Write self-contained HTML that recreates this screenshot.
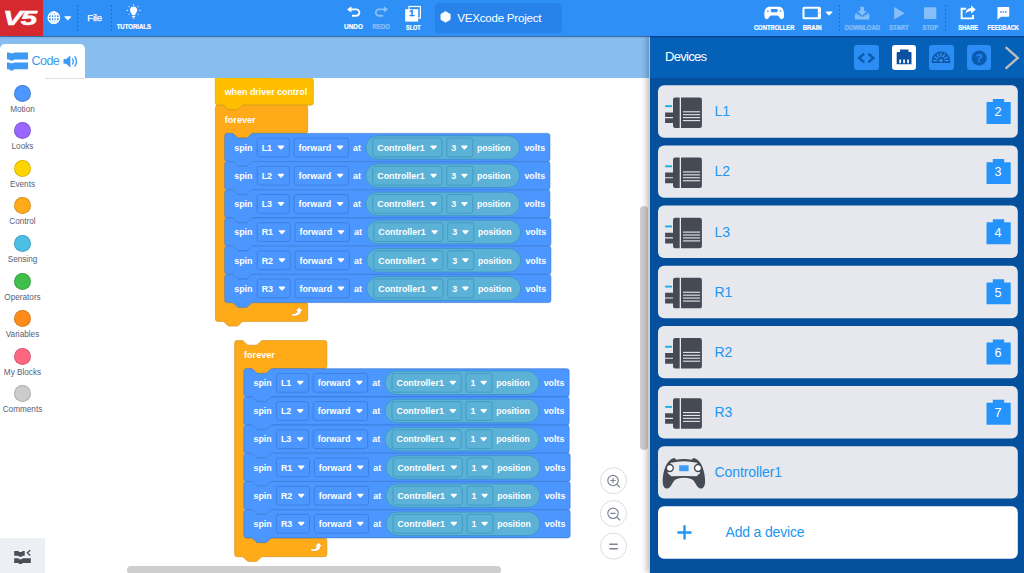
<!DOCTYPE html>
<html lang="en">
<head>
<meta charset="utf-8">
<title>VEXcode V5</title>
<style>
*{box-sizing:border-box;margin:0;padding:0}
html,body{width:1024px;height:573px;overflow:hidden;background:#fff;font-family:"Liberation Sans",sans-serif}
#app{position:relative;width:1024px;height:573px;overflow:hidden}
.abs{position:absolute}
#topbar{position:absolute;left:0;top:0;width:1024px;height:36px;background:#2E90F6;z-index:5;box-shadow:0 1px 0 rgba(0,35,90,.38),0 1px 2px rgba(0,35,90,.3)}
#logo{position:absolute;left:0;top:0;width:43px;height:36px;background:#D6282F}
#logo span{position:absolute;left:3px;top:6.7px;color:#fff;font-weight:700;font-style:italic;font-size:19.6px;line-height:22px;letter-spacing:-1.2px;transform:scaleX(1.5);transform-origin:0 50%;-webkit-text-stroke:.5px #fff}
.sep{position:absolute;top:5px;height:26px;width:1px;background:repeating-linear-gradient(to bottom,#1D6FD3 0,#1D6FD3 2px,rgba(29,111,211,0) 2px,rgba(29,111,211,0) 4px)}
.tlabel{position:absolute;color:#fff;font-weight:700;font-size:6.2px;line-height:7px;white-space:nowrap;text-align:center;letter-spacing:0;transform:scaleY(1.14);transform-origin:50% 50%;-webkit-text-stroke:.2px #fff}
.dim{opacity:.42}
#tabbar{position:absolute;left:0;top:36px;width:650px;height:42px;background:#88BDF0}
#tab{position:absolute;left:0;top:8px;width:85px;height:34px;background:#fff;border-radius:5px 5px 0 0}
#tab .t{position:absolute;left:31.5px;top:10px;font-size:12.6px;line-height:15px;color:#3B98F4;letter-spacing:-.6px}
#toolbox{position:absolute;left:0;top:78px;width:45px;height:495px;background:#fff}
.cat{position:absolute;left:0;width:45px;text-align:center}
.cat i{display:block;width:17px;height:17px;border-radius:50%;margin:0 auto;border:1px solid rgba(0,0,0,.15)}
.cat span{display:block;font-size:8.2px;line-height:9px;color:#575E75;margin-top:3px;white-space:nowrap;margin-left:-5px;margin-right:-5px}
#panel{position:absolute;left:650px;top:36px;width:374px;height:537px;background:#04509D;box-shadow:-3px 0 6px rgba(0,0,0,.28)}
#phead{position:absolute;left:0;top:0;width:374px;height:42px;background:#0560B8}
#phead .ttl{position:absolute;left:15px;top:13px;color:#fff;font-size:13px;line-height:15px;letter-spacing:-.7px}
.pbtn{position:absolute;top:9px;width:24.5px;height:24.5px;border-radius:3px;background:#2C8EF4}
.card{position:absolute;left:8px;width:360px;height:52px}
.card .nm{position:absolute;left:56.600px;top:17.600px;font-size:14px;line-height:16px;letter-spacing:-.1px;color:#2196F3;white-space:nowrap}
.card .port{position:absolute;left:328px;top:13.5px;width:24.2px;height:25px}
.card .port b{position:absolute;left:0;width:24.2px;top:6.500px;text-align:center;color:#fff;font-weight:400;font-size:12.6px;line-height:14px}
</style>
</head>
<body>
<div id="app">

<!-- workspace -->
<div id="workspace" class="abs" style="left:45px;top:78px;width:605px;height:495px;background:#fff"></div>
<svg id="ws" width="605" height="495" viewBox="0 0 605 495" style="position:absolute;left:45px;top:78px"><g transform="translate(-45,-78) scale(0.5875)" font-family="'Liberation Sans',sans-serif" font-weight="700" font-size="15.15" fill="#fff" stroke-width="1"><g transform="translate(366.47,179.06)"><path d="M 0,-46 c 25,-22 71,-22 96,0 H 162.9 a 4,4 0 0,1 4,4 V -4 a 4,4 0 0,1 -4,4 H 48 c -2,0 -3,1 -4,2 l -4,4 c -1,1 -2,2 -4,2 h -12 c -2,0 -3,-1 -4,-2 l -4,-4 c -1,-1 -2,-2 -4,-2 H 4 a 4,4 0 0,1 -4,-4 z" fill="#FFBF00" stroke="#CC9900"/><text x="16.00" y="-17.50">when driver control</text></g><g transform="translate(366.64,179.06)"><path d="M 0,4 A 4,4 0 0,1 4,0 H 12 c 2,0 3,1 4,2 l 4,4 c 1,1 2,2 4,2 h 12 c 2,0 3,-1 4,-2 l 4,-4 c 1,-1 2,-2 4,-2 H 153.00 a 4,4 0 0,1 4,4 V 44 a 4,4 0 0,1 -4,4 H 64 c -2,0 -3,1 -4,2 l -4,4 c -1,1 -2,2 -4,2 h -12 c -2,0 -3,-1 -4,-2 l -4,-4 c -1,-1 -2,-2 -4,-2 H 20 a 4,4 0 0,0 -4,4 V 332 a 4,4 0 0,0 4,4 H 28 c 2,0 3,1 4,2 l 4,4 c 1,1 2,2 4,2 h 12 c 2,0 3,-1 4,-2 l 4,-4 c 1,-1 2,-2 4,-2 H 153.00 a 4,4 0 0,1 4,4 V 364 a 4,4 0 0,1 -4,4 H 48 c -2,0 -3,1 -4,2 l -4,4 c -1,1 -2,2 -4,2 h -12 c -2,0 -3,-1 -4,-2 l -4,-4 c -1,-1 -2,-2 -4,-2 H 4 a 4,4 0 0,1 -4,-4 z" fill="#FFAB19" stroke="#CF8B17"/><text x="16" y="29.5" textLength="52.4" lengthAdjust="spacingAndGlyphs">forever</text><g transform="translate(129.9,344.7) scale(1.702)"><path d="M7.5,-0.2 L11,3.3 L9.3,3.4 C9,7 5.600,9 0.300,7.500 L0.200,6.100 C3.600,6.700 5.700,5.600 5.800,3.400 L4,3.400 Z" fill="#fff" stroke="#D9921A" stroke-width=".8" stroke-linejoin="round" paint-order="stroke"/></g></g><g transform="translate(382.64,227.06)"><path d="M 0,4 A 4,4 0 0,1 4,0 H 12 c 2,0 3,1 4,2 l 4,4 c 1,1 2,2 4,2 h 12 c 2,0 3,-1 4,-2 l 4,-4 c 1,-1 2,-2 4,-2 H 549.36 a 4,4 0 0,1 4,4 V 44 a 4,4 0 0,1 -4,4 H 48 c -2,0 -3,1 -4,2 l -4,4 c -1,1 -2,2 -4,2 h -12 c -2,0 -3,-1 -4,-2 l -4,-4 c -1,-1 -2,-2 -4,-2 H 4 a 4,4 0 0,1 -4,-4 z" fill="#4C97FF" stroke="#3373CC"/><text x="16.00" y="29.50">spin</text><rect x="55.14" y="8" width="54.68" height="32" rx="4" fill="#4C97FF" stroke="#3373CC"/><text x="62.74" y="29.50">L1</text><path transform="translate(90.12,20.7)" d="M1.1,0 h8.8 a1.1,1.1 0 0,1 0.8,1.85 l-4.2,4.5 a1.35,1.35 0 0,1 -2,0 l-4.2,-4.5 a1.1,1.1 0 0,1 0.8,-1.85 z" fill="#fff"/><rect x="117.82" y="8" width="92.56" height="32" rx="4" fill="#4C97FF" stroke="#3373CC"/><text x="125.42" y="29.50">forward</text><path transform="translate(190.68,20.7)" d="M1.1,0 h8.8 a1.1,1.1 0 0,1 0.8,1.85 l-4.2,4.5 a1.35,1.35 0 0,1 -2,0 l-4.2,-4.5 a1.1,1.1 0 0,1 0.8,-1.85 z" fill="#fff"/><text x="218.38" y="29.50">at</text><rect x="239.85" y="4" width="262.14" height="40" rx="20" fill="#5CB1D6" stroke="#2E8EB8"/><rect x="251.85" y="8" width="117.81" height="32" rx="4" fill="#5CB1D6" stroke="#2E8EB8"/><text x="259.45" y="29.50">Controller1</text><path transform="translate(349.96,20.7)" d="M1.1,0 h8.8 a1.1,1.1 0 0,1 0.8,1.85 l-4.2,4.5 a1.35,1.35 0 0,1 -2,0 l-4.2,-4.5 a1.1,1.1 0 0,1 0.8,-1.85 z" fill="#fff"/><rect x="377.66" y="8" width="44.43" height="32" rx="4" fill="#5CB1D6" stroke="#2E8EB8"/><text x="385.26" y="29.50">3</text><path transform="translate(402.39,20.7)" d="M1.1,0 h8.8 a1.1,1.1 0 0,1 0.8,1.85 l-4.2,4.5 a1.35,1.35 0 0,1 -2,0 l-4.2,-4.5 a1.1,1.1 0 0,1 0.8,-1.85 z" fill="#fff"/><text x="429.09" y="29.5" textLength="57.31" lengthAdjust="spacingAndGlyphs">position</text><text x="510.00" y="29.50">volts</text></g><g transform="translate(382.64,275.06)"><path d="M 0,4 A 4,4 0 0,1 4,0 H 12 c 2,0 3,1 4,2 l 4,4 c 1,1 2,2 4,2 h 12 c 2,0 3,-1 4,-2 l 4,-4 c 1,-1 2,-2 4,-2 H 549.36 a 4,4 0 0,1 4,4 V 44 a 4,4 0 0,1 -4,4 H 48 c -2,0 -3,1 -4,2 l -4,4 c -1,1 -2,2 -4,2 h -12 c -2,0 -3,-1 -4,-2 l -4,-4 c -1,-1 -2,-2 -4,-2 H 4 a 4,4 0 0,1 -4,-4 z" fill="#4C97FF" stroke="#3373CC"/><text x="16.00" y="29.50">spin</text><rect x="55.14" y="8" width="54.68" height="32" rx="4" fill="#4C97FF" stroke="#3373CC"/><text x="62.74" y="29.50">L2</text><path transform="translate(90.12,20.7)" d="M1.1,0 h8.8 a1.1,1.1 0 0,1 0.8,1.85 l-4.2,4.5 a1.35,1.35 0 0,1 -2,0 l-4.2,-4.5 a1.1,1.1 0 0,1 0.8,-1.85 z" fill="#fff"/><rect x="117.82" y="8" width="92.56" height="32" rx="4" fill="#4C97FF" stroke="#3373CC"/><text x="125.42" y="29.50">forward</text><path transform="translate(190.68,20.7)" d="M1.1,0 h8.8 a1.1,1.1 0 0,1 0.8,1.85 l-4.2,4.5 a1.35,1.35 0 0,1 -2,0 l-4.2,-4.5 a1.1,1.1 0 0,1 0.8,-1.85 z" fill="#fff"/><text x="218.38" y="29.50">at</text><rect x="239.85" y="4" width="262.14" height="40" rx="20" fill="#5CB1D6" stroke="#2E8EB8"/><rect x="251.85" y="8" width="117.81" height="32" rx="4" fill="#5CB1D6" stroke="#2E8EB8"/><text x="259.45" y="29.50">Controller1</text><path transform="translate(349.96,20.7)" d="M1.1,0 h8.8 a1.1,1.1 0 0,1 0.8,1.85 l-4.2,4.5 a1.35,1.35 0 0,1 -2,0 l-4.2,-4.5 a1.1,1.1 0 0,1 0.8,-1.85 z" fill="#fff"/><rect x="377.66" y="8" width="44.43" height="32" rx="4" fill="#5CB1D6" stroke="#2E8EB8"/><text x="385.26" y="29.50">3</text><path transform="translate(402.39,20.7)" d="M1.1,0 h8.8 a1.1,1.1 0 0,1 0.8,1.85 l-4.2,4.5 a1.35,1.35 0 0,1 -2,0 l-4.2,-4.5 a1.1,1.1 0 0,1 0.8,-1.85 z" fill="#fff"/><text x="429.09" y="29.5" textLength="57.31" lengthAdjust="spacingAndGlyphs">position</text><text x="510.00" y="29.50">volts</text></g><g transform="translate(382.64,323.06)"><path d="M 0,4 A 4,4 0 0,1 4,0 H 12 c 2,0 3,1 4,2 l 4,4 c 1,1 2,2 4,2 h 12 c 2,0 3,-1 4,-2 l 4,-4 c 1,-1 2,-2 4,-2 H 549.36 a 4,4 0 0,1 4,4 V 44 a 4,4 0 0,1 -4,4 H 48 c -2,0 -3,1 -4,2 l -4,4 c -1,1 -2,2 -4,2 h -12 c -2,0 -3,-1 -4,-2 l -4,-4 c -1,-1 -2,-2 -4,-2 H 4 a 4,4 0 0,1 -4,-4 z" fill="#4C97FF" stroke="#3373CC"/><text x="16.00" y="29.50">spin</text><rect x="55.14" y="8" width="54.68" height="32" rx="4" fill="#4C97FF" stroke="#3373CC"/><text x="62.74" y="29.50">L3</text><path transform="translate(90.12,20.7)" d="M1.1,0 h8.8 a1.1,1.1 0 0,1 0.8,1.85 l-4.2,4.5 a1.35,1.35 0 0,1 -2,0 l-4.2,-4.5 a1.1,1.1 0 0,1 0.8,-1.85 z" fill="#fff"/><rect x="117.82" y="8" width="92.56" height="32" rx="4" fill="#4C97FF" stroke="#3373CC"/><text x="125.42" y="29.50">forward</text><path transform="translate(190.68,20.7)" d="M1.1,0 h8.8 a1.1,1.1 0 0,1 0.8,1.85 l-4.2,4.5 a1.35,1.35 0 0,1 -2,0 l-4.2,-4.5 a1.1,1.1 0 0,1 0.8,-1.85 z" fill="#fff"/><text x="218.38" y="29.50">at</text><rect x="239.85" y="4" width="262.14" height="40" rx="20" fill="#5CB1D6" stroke="#2E8EB8"/><rect x="251.85" y="8" width="117.81" height="32" rx="4" fill="#5CB1D6" stroke="#2E8EB8"/><text x="259.45" y="29.50">Controller1</text><path transform="translate(349.96,20.7)" d="M1.1,0 h8.8 a1.1,1.1 0 0,1 0.8,1.85 l-4.2,4.5 a1.35,1.35 0 0,1 -2,0 l-4.2,-4.5 a1.1,1.1 0 0,1 0.8,-1.85 z" fill="#fff"/><rect x="377.66" y="8" width="44.43" height="32" rx="4" fill="#5CB1D6" stroke="#2E8EB8"/><text x="385.26" y="29.50">3</text><path transform="translate(402.39,20.7)" d="M1.1,0 h8.8 a1.1,1.1 0 0,1 0.8,1.85 l-4.2,4.5 a1.35,1.35 0 0,1 -2,0 l-4.2,-4.5 a1.1,1.1 0 0,1 0.8,-1.85 z" fill="#fff"/><text x="429.09" y="29.5" textLength="57.31" lengthAdjust="spacingAndGlyphs">position</text><text x="510.00" y="29.50">volts</text></g><g transform="translate(382.64,371.06)"><path d="M 0,4 A 4,4 0 0,1 4,0 H 12 c 2,0 3,1 4,2 l 4,4 c 1,1 2,2 4,2 h 12 c 2,0 3,-1 4,-2 l 4,-4 c 1,-1 2,-2 4,-2 H 551.04 a 4,4 0 0,1 4,4 V 44 a 4,4 0 0,1 -4,4 H 48 c -2,0 -3,1 -4,2 l -4,4 c -1,1 -2,2 -4,2 h -12 c -2,0 -3,-1 -4,-2 l -4,-4 c -1,-1 -2,-2 -4,-2 H 4 a 4,4 0 0,1 -4,-4 z" fill="#4C97FF" stroke="#3373CC"/><text x="16.00" y="29.50">spin</text><rect x="55.14" y="8" width="56.37" height="32" rx="4" fill="#4C97FF" stroke="#3373CC"/><text x="62.74" y="29.50">R1</text><path transform="translate(91.81,20.7)" d="M1.1,0 h8.8 a1.1,1.1 0 0,1 0.8,1.85 l-4.2,4.5 a1.35,1.35 0 0,1 -2,0 l-4.2,-4.5 a1.1,1.1 0 0,1 0.8,-1.85 z" fill="#fff"/><rect x="119.51" y="8" width="92.56" height="32" rx="4" fill="#4C97FF" stroke="#3373CC"/><text x="127.11" y="29.50">forward</text><path transform="translate(192.37,20.7)" d="M1.1,0 h8.8 a1.1,1.1 0 0,1 0.8,1.85 l-4.2,4.5 a1.35,1.35 0 0,1 -2,0 l-4.2,-4.5 a1.1,1.1 0 0,1 0.8,-1.85 z" fill="#fff"/><text x="220.07" y="29.50">at</text><rect x="241.54" y="4" width="262.14" height="40" rx="20" fill="#5CB1D6" stroke="#2E8EB8"/><rect x="253.54" y="8" width="117.81" height="32" rx="4" fill="#5CB1D6" stroke="#2E8EB8"/><text x="261.14" y="29.50">Controller1</text><path transform="translate(351.65,20.7)" d="M1.1,0 h8.8 a1.1,1.1 0 0,1 0.8,1.85 l-4.2,4.5 a1.35,1.35 0 0,1 -2,0 l-4.2,-4.5 a1.1,1.1 0 0,1 0.8,-1.85 z" fill="#fff"/><rect x="379.35" y="8" width="44.43" height="32" rx="4" fill="#5CB1D6" stroke="#2E8EB8"/><text x="386.95" y="29.50">3</text><path transform="translate(404.08,20.7)" d="M1.1,0 h8.8 a1.1,1.1 0 0,1 0.8,1.85 l-4.2,4.5 a1.35,1.35 0 0,1 -2,0 l-4.2,-4.5 a1.1,1.1 0 0,1 0.8,-1.85 z" fill="#fff"/><text x="430.78" y="29.5" textLength="57.31" lengthAdjust="spacingAndGlyphs">position</text><text x="511.68" y="29.50">volts</text></g><g transform="translate(382.64,419.06)"><path d="M 0,4 A 4,4 0 0,1 4,0 H 12 c 2,0 3,1 4,2 l 4,4 c 1,1 2,2 4,2 h 12 c 2,0 3,-1 4,-2 l 4,-4 c 1,-1 2,-2 4,-2 H 551.04 a 4,4 0 0,1 4,4 V 44 a 4,4 0 0,1 -4,4 H 48 c -2,0 -3,1 -4,2 l -4,4 c -1,1 -2,2 -4,2 h -12 c -2,0 -3,-1 -4,-2 l -4,-4 c -1,-1 -2,-2 -4,-2 H 4 a 4,4 0 0,1 -4,-4 z" fill="#4C97FF" stroke="#3373CC"/><text x="16.00" y="29.50">spin</text><rect x="55.14" y="8" width="56.37" height="32" rx="4" fill="#4C97FF" stroke="#3373CC"/><text x="62.74" y="29.50">R2</text><path transform="translate(91.81,20.7)" d="M1.1,0 h8.8 a1.1,1.1 0 0,1 0.8,1.85 l-4.2,4.5 a1.35,1.35 0 0,1 -2,0 l-4.2,-4.5 a1.1,1.1 0 0,1 0.8,-1.85 z" fill="#fff"/><rect x="119.51" y="8" width="92.56" height="32" rx="4" fill="#4C97FF" stroke="#3373CC"/><text x="127.11" y="29.50">forward</text><path transform="translate(192.37,20.7)" d="M1.1,0 h8.8 a1.1,1.1 0 0,1 0.8,1.85 l-4.2,4.5 a1.35,1.35 0 0,1 -2,0 l-4.2,-4.5 a1.1,1.1 0 0,1 0.8,-1.85 z" fill="#fff"/><text x="220.07" y="29.50">at</text><rect x="241.54" y="4" width="262.14" height="40" rx="20" fill="#5CB1D6" stroke="#2E8EB8"/><rect x="253.54" y="8" width="117.81" height="32" rx="4" fill="#5CB1D6" stroke="#2E8EB8"/><text x="261.14" y="29.50">Controller1</text><path transform="translate(351.65,20.7)" d="M1.1,0 h8.8 a1.1,1.1 0 0,1 0.8,1.85 l-4.2,4.5 a1.35,1.35 0 0,1 -2,0 l-4.2,-4.5 a1.1,1.1 0 0,1 0.8,-1.85 z" fill="#fff"/><rect x="379.35" y="8" width="44.43" height="32" rx="4" fill="#5CB1D6" stroke="#2E8EB8"/><text x="386.95" y="29.50">3</text><path transform="translate(404.08,20.7)" d="M1.1,0 h8.8 a1.1,1.1 0 0,1 0.8,1.85 l-4.2,4.5 a1.35,1.35 0 0,1 -2,0 l-4.2,-4.5 a1.1,1.1 0 0,1 0.8,-1.85 z" fill="#fff"/><text x="430.78" y="29.5" textLength="57.31" lengthAdjust="spacingAndGlyphs">position</text><text x="511.68" y="29.50">volts</text></g><g transform="translate(382.64,467.06)"><path d="M 0,4 A 4,4 0 0,1 4,0 H 12 c 2,0 3,1 4,2 l 4,4 c 1,1 2,2 4,2 h 12 c 2,0 3,-1 4,-2 l 4,-4 c 1,-1 2,-2 4,-2 H 551.04 a 4,4 0 0,1 4,4 V 44 a 4,4 0 0,1 -4,4 H 48 c -2,0 -3,1 -4,2 l -4,4 c -1,1 -2,2 -4,2 h -12 c -2,0 -3,-1 -4,-2 l -4,-4 c -1,-1 -2,-2 -4,-2 H 4 a 4,4 0 0,1 -4,-4 z" fill="#4C97FF" stroke="#3373CC"/><text x="16.00" y="29.50">spin</text><rect x="55.14" y="8" width="56.37" height="32" rx="4" fill="#4C97FF" stroke="#3373CC"/><text x="62.74" y="29.50">R3</text><path transform="translate(91.81,20.7)" d="M1.1,0 h8.8 a1.1,1.1 0 0,1 0.8,1.85 l-4.2,4.5 a1.35,1.35 0 0,1 -2,0 l-4.2,-4.5 a1.1,1.1 0 0,1 0.8,-1.85 z" fill="#fff"/><rect x="119.51" y="8" width="92.56" height="32" rx="4" fill="#4C97FF" stroke="#3373CC"/><text x="127.11" y="29.50">forward</text><path transform="translate(192.37,20.7)" d="M1.1,0 h8.8 a1.1,1.1 0 0,1 0.8,1.85 l-4.2,4.5 a1.35,1.35 0 0,1 -2,0 l-4.2,-4.5 a1.1,1.1 0 0,1 0.8,-1.85 z" fill="#fff"/><text x="220.07" y="29.50">at</text><rect x="241.54" y="4" width="262.14" height="40" rx="20" fill="#5CB1D6" stroke="#2E8EB8"/><rect x="253.54" y="8" width="117.81" height="32" rx="4" fill="#5CB1D6" stroke="#2E8EB8"/><text x="261.14" y="29.50">Controller1</text><path transform="translate(351.65,20.7)" d="M1.1,0 h8.8 a1.1,1.1 0 0,1 0.8,1.85 l-4.2,4.5 a1.35,1.35 0 0,1 -2,0 l-4.2,-4.5 a1.1,1.1 0 0,1 0.8,-1.85 z" fill="#fff"/><rect x="379.35" y="8" width="44.43" height="32" rx="4" fill="#5CB1D6" stroke="#2E8EB8"/><text x="386.95" y="29.50">3</text><path transform="translate(404.08,20.7)" d="M1.1,0 h8.8 a1.1,1.1 0 0,1 0.8,1.85 l-4.2,4.5 a1.35,1.35 0 0,1 -2,0 l-4.2,-4.5 a1.1,1.1 0 0,1 0.8,-1.85 z" fill="#fff"/><text x="430.78" y="29.5" textLength="57.31" lengthAdjust="spacingAndGlyphs">position</text><text x="511.68" y="29.50">volts</text></g><g transform="translate(399.40,579.57)"><path d="M 0,4 A 4,4 0 0,1 4,0 H 12 c 2,0 3,1 4,2 l 4,4 c 1,1 2,2 4,2 h 12 c 2,0 3,-1 4,-2 l 4,-4 c 1,-1 2,-2 4,-2 H 153.00 a 4,4 0 0,1 4,4 V 44 a 4,4 0 0,1 -4,4 H 64 c -2,0 -3,1 -4,2 l -4,4 c -1,1 -2,2 -4,2 h -12 c -2,0 -3,-1 -4,-2 l -4,-4 c -1,-1 -2,-2 -4,-2 H 20 a 4,4 0 0,0 -4,4 V 332 a 4,4 0 0,0 4,4 H 28 c 2,0 3,1 4,2 l 4,4 c 1,1 2,2 4,2 h 12 c 2,0 3,-1 4,-2 l 4,-4 c 1,-1 2,-2 4,-2 H 153.00 a 4,4 0 0,1 4,4 V 364 a 4,4 0 0,1 -4,4 H 48 c -2,0 -3,1 -4,2 l -4,4 c -1,1 -2,2 -4,2 h -12 c -2,0 -3,-1 -4,-2 l -4,-4 c -1,-1 -2,-2 -4,-2 H 4 a 4,4 0 0,1 -4,-4 z" fill="#FFAB19" stroke="#CF8B17"/><text x="16" y="29.5" textLength="52.4" lengthAdjust="spacingAndGlyphs">forever</text><g transform="translate(129.9,344.7) scale(1.702)"><path d="M7.5,-0.2 L11,3.3 L9.3,3.4 C9,7 5.600,9 0.300,7.500 L0.200,6.100 C3.600,6.700 5.700,5.600 5.800,3.400 L4,3.400 Z" fill="#fff" stroke="#D9921A" stroke-width=".8" stroke-linejoin="round" paint-order="stroke"/></g></g><g transform="translate(415.40,627.57)"><path d="M 0,4 A 4,4 0 0,1 4,0 H 12 c 2,0 3,1 4,2 l 4,4 c 1,1 2,2 4,2 h 12 c 2,0 3,-1 4,-2 l 4,-4 c 1,-1 2,-2 4,-2 H 549.36 a 4,4 0 0,1 4,4 V 44 a 4,4 0 0,1 -4,4 H 48 c -2,0 -3,1 -4,2 l -4,4 c -1,1 -2,2 -4,2 h -12 c -2,0 -3,-1 -4,-2 l -4,-4 c -1,-1 -2,-2 -4,-2 H 4 a 4,4 0 0,1 -4,-4 z" fill="#4C97FF" stroke="#3373CC"/><text x="16.00" y="29.50">spin</text><rect x="55.14" y="8" width="54.68" height="32" rx="4" fill="#4C97FF" stroke="#3373CC"/><text x="62.74" y="29.50">L1</text><path transform="translate(90.12,20.7)" d="M1.1,0 h8.8 a1.1,1.1 0 0,1 0.8,1.85 l-4.2,4.5 a1.35,1.35 0 0,1 -2,0 l-4.2,-4.5 a1.1,1.1 0 0,1 0.8,-1.85 z" fill="#fff"/><rect x="117.82" y="8" width="92.56" height="32" rx="4" fill="#4C97FF" stroke="#3373CC"/><text x="125.42" y="29.50">forward</text><path transform="translate(190.68,20.7)" d="M1.1,0 h8.8 a1.1,1.1 0 0,1 0.8,1.85 l-4.2,4.5 a1.35,1.35 0 0,1 -2,0 l-4.2,-4.5 a1.1,1.1 0 0,1 0.8,-1.85 z" fill="#fff"/><text x="218.38" y="29.50">at</text><rect x="239.85" y="4" width="262.14" height="40" rx="20" fill="#5CB1D6" stroke="#2E8EB8"/><rect x="251.85" y="8" width="117.81" height="32" rx="4" fill="#5CB1D6" stroke="#2E8EB8"/><text x="259.45" y="29.50">Controller1</text><path transform="translate(349.96,20.7)" d="M1.1,0 h8.8 a1.1,1.1 0 0,1 0.8,1.85 l-4.2,4.5 a1.35,1.35 0 0,1 -2,0 l-4.2,-4.5 a1.1,1.1 0 0,1 0.8,-1.85 z" fill="#fff"/><rect x="377.66" y="8" width="44.43" height="32" rx="4" fill="#5CB1D6" stroke="#2E8EB8"/><text x="385.26" y="29.50">1</text><path transform="translate(402.39,20.7)" d="M1.1,0 h8.8 a1.1,1.1 0 0,1 0.8,1.85 l-4.2,4.5 a1.35,1.35 0 0,1 -2,0 l-4.2,-4.5 a1.1,1.1 0 0,1 0.8,-1.85 z" fill="#fff"/><text x="429.09" y="29.5" textLength="57.31" lengthAdjust="spacingAndGlyphs">position</text><text x="510.00" y="29.50">volts</text></g><g transform="translate(415.40,675.57)"><path d="M 0,4 A 4,4 0 0,1 4,0 H 12 c 2,0 3,1 4,2 l 4,4 c 1,1 2,2 4,2 h 12 c 2,0 3,-1 4,-2 l 4,-4 c 1,-1 2,-2 4,-2 H 549.36 a 4,4 0 0,1 4,4 V 44 a 4,4 0 0,1 -4,4 H 48 c -2,0 -3,1 -4,2 l -4,4 c -1,1 -2,2 -4,2 h -12 c -2,0 -3,-1 -4,-2 l -4,-4 c -1,-1 -2,-2 -4,-2 H 4 a 4,4 0 0,1 -4,-4 z" fill="#4C97FF" stroke="#3373CC"/><text x="16.00" y="29.50">spin</text><rect x="55.14" y="8" width="54.68" height="32" rx="4" fill="#4C97FF" stroke="#3373CC"/><text x="62.74" y="29.50">L2</text><path transform="translate(90.12,20.7)" d="M1.1,0 h8.8 a1.1,1.1 0 0,1 0.8,1.85 l-4.2,4.5 a1.35,1.35 0 0,1 -2,0 l-4.2,-4.5 a1.1,1.1 0 0,1 0.8,-1.85 z" fill="#fff"/><rect x="117.82" y="8" width="92.56" height="32" rx="4" fill="#4C97FF" stroke="#3373CC"/><text x="125.42" y="29.50">forward</text><path transform="translate(190.68,20.7)" d="M1.1,0 h8.8 a1.1,1.1 0 0,1 0.8,1.85 l-4.2,4.5 a1.35,1.35 0 0,1 -2,0 l-4.2,-4.5 a1.1,1.1 0 0,1 0.8,-1.85 z" fill="#fff"/><text x="218.38" y="29.50">at</text><rect x="239.85" y="4" width="262.14" height="40" rx="20" fill="#5CB1D6" stroke="#2E8EB8"/><rect x="251.85" y="8" width="117.81" height="32" rx="4" fill="#5CB1D6" stroke="#2E8EB8"/><text x="259.45" y="29.50">Controller1</text><path transform="translate(349.96,20.7)" d="M1.1,0 h8.8 a1.1,1.1 0 0,1 0.8,1.85 l-4.2,4.5 a1.35,1.35 0 0,1 -2,0 l-4.2,-4.5 a1.1,1.1 0 0,1 0.8,-1.85 z" fill="#fff"/><rect x="377.66" y="8" width="44.43" height="32" rx="4" fill="#5CB1D6" stroke="#2E8EB8"/><text x="385.26" y="29.50">1</text><path transform="translate(402.39,20.7)" d="M1.1,0 h8.8 a1.1,1.1 0 0,1 0.8,1.85 l-4.2,4.5 a1.35,1.35 0 0,1 -2,0 l-4.2,-4.5 a1.1,1.1 0 0,1 0.8,-1.85 z" fill="#fff"/><text x="429.09" y="29.5" textLength="57.31" lengthAdjust="spacingAndGlyphs">position</text><text x="510.00" y="29.50">volts</text></g><g transform="translate(415.40,723.57)"><path d="M 0,4 A 4,4 0 0,1 4,0 H 12 c 2,0 3,1 4,2 l 4,4 c 1,1 2,2 4,2 h 12 c 2,0 3,-1 4,-2 l 4,-4 c 1,-1 2,-2 4,-2 H 549.36 a 4,4 0 0,1 4,4 V 44 a 4,4 0 0,1 -4,4 H 48 c -2,0 -3,1 -4,2 l -4,4 c -1,1 -2,2 -4,2 h -12 c -2,0 -3,-1 -4,-2 l -4,-4 c -1,-1 -2,-2 -4,-2 H 4 a 4,4 0 0,1 -4,-4 z" fill="#4C97FF" stroke="#3373CC"/><text x="16.00" y="29.50">spin</text><rect x="55.14" y="8" width="54.68" height="32" rx="4" fill="#4C97FF" stroke="#3373CC"/><text x="62.74" y="29.50">L3</text><path transform="translate(90.12,20.7)" d="M1.1,0 h8.8 a1.1,1.1 0 0,1 0.8,1.85 l-4.2,4.5 a1.35,1.35 0 0,1 -2,0 l-4.2,-4.5 a1.1,1.1 0 0,1 0.8,-1.85 z" fill="#fff"/><rect x="117.82" y="8" width="92.56" height="32" rx="4" fill="#4C97FF" stroke="#3373CC"/><text x="125.42" y="29.50">forward</text><path transform="translate(190.68,20.7)" d="M1.1,0 h8.8 a1.1,1.1 0 0,1 0.8,1.85 l-4.2,4.5 a1.35,1.35 0 0,1 -2,0 l-4.2,-4.5 a1.1,1.1 0 0,1 0.8,-1.85 z" fill="#fff"/><text x="218.38" y="29.50">at</text><rect x="239.85" y="4" width="262.14" height="40" rx="20" fill="#5CB1D6" stroke="#2E8EB8"/><rect x="251.85" y="8" width="117.81" height="32" rx="4" fill="#5CB1D6" stroke="#2E8EB8"/><text x="259.45" y="29.50">Controller1</text><path transform="translate(349.96,20.7)" d="M1.1,0 h8.8 a1.1,1.1 0 0,1 0.8,1.85 l-4.2,4.5 a1.35,1.35 0 0,1 -2,0 l-4.2,-4.5 a1.1,1.1 0 0,1 0.8,-1.85 z" fill="#fff"/><rect x="377.66" y="8" width="44.43" height="32" rx="4" fill="#5CB1D6" stroke="#2E8EB8"/><text x="385.26" y="29.50">1</text><path transform="translate(402.39,20.7)" d="M1.1,0 h8.8 a1.1,1.1 0 0,1 0.8,1.85 l-4.2,4.5 a1.35,1.35 0 0,1 -2,0 l-4.2,-4.5 a1.1,1.1 0 0,1 0.8,-1.85 z" fill="#fff"/><text x="429.09" y="29.5" textLength="57.31" lengthAdjust="spacingAndGlyphs">position</text><text x="510.00" y="29.50">volts</text></g><g transform="translate(415.40,771.57)"><path d="M 0,4 A 4,4 0 0,1 4,0 H 12 c 2,0 3,1 4,2 l 4,4 c 1,1 2,2 4,2 h 12 c 2,0 3,-1 4,-2 l 4,-4 c 1,-1 2,-2 4,-2 H 551.04 a 4,4 0 0,1 4,4 V 44 a 4,4 0 0,1 -4,4 H 48 c -2,0 -3,1 -4,2 l -4,4 c -1,1 -2,2 -4,2 h -12 c -2,0 -3,-1 -4,-2 l -4,-4 c -1,-1 -2,-2 -4,-2 H 4 a 4,4 0 0,1 -4,-4 z" fill="#4C97FF" stroke="#3373CC"/><text x="16.00" y="29.50">spin</text><rect x="55.14" y="8" width="56.37" height="32" rx="4" fill="#4C97FF" stroke="#3373CC"/><text x="62.74" y="29.50">R1</text><path transform="translate(91.81,20.7)" d="M1.1,0 h8.8 a1.1,1.1 0 0,1 0.8,1.85 l-4.2,4.5 a1.35,1.35 0 0,1 -2,0 l-4.2,-4.5 a1.1,1.1 0 0,1 0.8,-1.85 z" fill="#fff"/><rect x="119.51" y="8" width="92.56" height="32" rx="4" fill="#4C97FF" stroke="#3373CC"/><text x="127.11" y="29.50">forward</text><path transform="translate(192.37,20.7)" d="M1.1,0 h8.8 a1.1,1.1 0 0,1 0.8,1.85 l-4.2,4.5 a1.35,1.35 0 0,1 -2,0 l-4.2,-4.5 a1.1,1.1 0 0,1 0.8,-1.85 z" fill="#fff"/><text x="220.07" y="29.50">at</text><rect x="241.54" y="4" width="262.14" height="40" rx="20" fill="#5CB1D6" stroke="#2E8EB8"/><rect x="253.54" y="8" width="117.81" height="32" rx="4" fill="#5CB1D6" stroke="#2E8EB8"/><text x="261.14" y="29.50">Controller1</text><path transform="translate(351.65,20.7)" d="M1.1,0 h8.8 a1.1,1.1 0 0,1 0.8,1.85 l-4.2,4.5 a1.35,1.35 0 0,1 -2,0 l-4.2,-4.5 a1.1,1.1 0 0,1 0.8,-1.85 z" fill="#fff"/><rect x="379.35" y="8" width="44.43" height="32" rx="4" fill="#5CB1D6" stroke="#2E8EB8"/><text x="386.95" y="29.50">1</text><path transform="translate(404.08,20.7)" d="M1.1,0 h8.8 a1.1,1.1 0 0,1 0.8,1.85 l-4.2,4.5 a1.35,1.35 0 0,1 -2,0 l-4.2,-4.5 a1.1,1.1 0 0,1 0.8,-1.85 z" fill="#fff"/><text x="430.78" y="29.5" textLength="57.31" lengthAdjust="spacingAndGlyphs">position</text><text x="511.68" y="29.50">volts</text></g><g transform="translate(415.40,819.57)"><path d="M 0,4 A 4,4 0 0,1 4,0 H 12 c 2,0 3,1 4,2 l 4,4 c 1,1 2,2 4,2 h 12 c 2,0 3,-1 4,-2 l 4,-4 c 1,-1 2,-2 4,-2 H 551.04 a 4,4 0 0,1 4,4 V 44 a 4,4 0 0,1 -4,4 H 48 c -2,0 -3,1 -4,2 l -4,4 c -1,1 -2,2 -4,2 h -12 c -2,0 -3,-1 -4,-2 l -4,-4 c -1,-1 -2,-2 -4,-2 H 4 a 4,4 0 0,1 -4,-4 z" fill="#4C97FF" stroke="#3373CC"/><text x="16.00" y="29.50">spin</text><rect x="55.14" y="8" width="56.37" height="32" rx="4" fill="#4C97FF" stroke="#3373CC"/><text x="62.74" y="29.50">R2</text><path transform="translate(91.81,20.7)" d="M1.1,0 h8.8 a1.1,1.1 0 0,1 0.8,1.85 l-4.2,4.5 a1.35,1.35 0 0,1 -2,0 l-4.2,-4.5 a1.1,1.1 0 0,1 0.8,-1.85 z" fill="#fff"/><rect x="119.51" y="8" width="92.56" height="32" rx="4" fill="#4C97FF" stroke="#3373CC"/><text x="127.11" y="29.50">forward</text><path transform="translate(192.37,20.7)" d="M1.1,0 h8.8 a1.1,1.1 0 0,1 0.8,1.85 l-4.2,4.5 a1.35,1.35 0 0,1 -2,0 l-4.2,-4.5 a1.1,1.1 0 0,1 0.8,-1.85 z" fill="#fff"/><text x="220.07" y="29.50">at</text><rect x="241.54" y="4" width="262.14" height="40" rx="20" fill="#5CB1D6" stroke="#2E8EB8"/><rect x="253.54" y="8" width="117.81" height="32" rx="4" fill="#5CB1D6" stroke="#2E8EB8"/><text x="261.14" y="29.50">Controller1</text><path transform="translate(351.65,20.7)" d="M1.1,0 h8.8 a1.1,1.1 0 0,1 0.8,1.85 l-4.2,4.5 a1.35,1.35 0 0,1 -2,0 l-4.2,-4.5 a1.1,1.1 0 0,1 0.8,-1.85 z" fill="#fff"/><rect x="379.35" y="8" width="44.43" height="32" rx="4" fill="#5CB1D6" stroke="#2E8EB8"/><text x="386.95" y="29.50">1</text><path transform="translate(404.08,20.7)" d="M1.1,0 h8.8 a1.1,1.1 0 0,1 0.8,1.85 l-4.2,4.5 a1.35,1.35 0 0,1 -2,0 l-4.2,-4.5 a1.1,1.1 0 0,1 0.8,-1.85 z" fill="#fff"/><text x="430.78" y="29.5" textLength="57.31" lengthAdjust="spacingAndGlyphs">position</text><text x="511.68" y="29.50">volts</text></g><g transform="translate(415.40,867.57)"><path d="M 0,4 A 4,4 0 0,1 4,0 H 12 c 2,0 3,1 4,2 l 4,4 c 1,1 2,2 4,2 h 12 c 2,0 3,-1 4,-2 l 4,-4 c 1,-1 2,-2 4,-2 H 551.04 a 4,4 0 0,1 4,4 V 44 a 4,4 0 0,1 -4,4 H 48 c -2,0 -3,1 -4,2 l -4,4 c -1,1 -2,2 -4,2 h -12 c -2,0 -3,-1 -4,-2 l -4,-4 c -1,-1 -2,-2 -4,-2 H 4 a 4,4 0 0,1 -4,-4 z" fill="#4C97FF" stroke="#3373CC"/><text x="16.00" y="29.50">spin</text><rect x="55.14" y="8" width="56.37" height="32" rx="4" fill="#4C97FF" stroke="#3373CC"/><text x="62.74" y="29.50">R3</text><path transform="translate(91.81,20.7)" d="M1.1,0 h8.8 a1.1,1.1 0 0,1 0.8,1.85 l-4.2,4.5 a1.35,1.35 0 0,1 -2,0 l-4.2,-4.5 a1.1,1.1 0 0,1 0.8,-1.85 z" fill="#fff"/><rect x="119.51" y="8" width="92.56" height="32" rx="4" fill="#4C97FF" stroke="#3373CC"/><text x="127.11" y="29.50">forward</text><path transform="translate(192.37,20.7)" d="M1.1,0 h8.8 a1.1,1.1 0 0,1 0.8,1.85 l-4.2,4.5 a1.35,1.35 0 0,1 -2,0 l-4.2,-4.5 a1.1,1.1 0 0,1 0.8,-1.85 z" fill="#fff"/><text x="220.07" y="29.50">at</text><rect x="241.54" y="4" width="262.14" height="40" rx="20" fill="#5CB1D6" stroke="#2E8EB8"/><rect x="253.54" y="8" width="117.81" height="32" rx="4" fill="#5CB1D6" stroke="#2E8EB8"/><text x="261.14" y="29.50">Controller1</text><path transform="translate(351.65,20.7)" d="M1.1,0 h8.8 a1.1,1.1 0 0,1 0.8,1.85 l-4.2,4.5 a1.35,1.35 0 0,1 -2,0 l-4.2,-4.5 a1.1,1.1 0 0,1 0.8,-1.85 z" fill="#fff"/><rect x="379.35" y="8" width="44.43" height="32" rx="4" fill="#5CB1D6" stroke="#2E8EB8"/><text x="386.95" y="29.50">1</text><path transform="translate(404.08,20.7)" d="M1.1,0 h8.8 a1.1,1.1 0 0,1 0.8,1.85 l-4.2,4.5 a1.35,1.35 0 0,1 -2,0 l-4.2,-4.5 a1.1,1.1 0 0,1 0.8,-1.85 z" fill="#fff"/><text x="430.78" y="29.5" textLength="57.31" lengthAdjust="spacingAndGlyphs">position</text><text x="511.68" y="29.50">volts</text></g></g></svg>

<!-- scrollbars -->
<div class="abs" style="left:640px;top:205.5px;width:8.4px;height:244px;border-radius:4.2px;background:#CECECE"></div>
<div class="abs" style="left:127px;top:566px;width:373.5px;height:8.4px;border-radius:4.2px;background:#CECECE"></div>

<!-- zoom controls -->
<svg class="abs" style="left:598px;top:465px" width="30" height="96" viewBox="0 0 30 96">
 <g fill="#fff" stroke="#DADCE3" stroke-width="1"><circle cx="15.500" cy="15.700" r="13"/><circle cx="15.500" cy="48.500" r="13"/><circle cx="15.500" cy="81.100" r="13"/></g>
 <g fill="none" stroke="#7B8193" stroke-width="1.150" stroke-linecap="round">
  <circle cx="15" cy="15.500" r="5.200"/><path d="M18.900,19.400 l2.800,2.800 M12.800,15.500 h4.400 M15,13.300 v4.400"/>
  <circle cx="15" cy="48.300" r="5.200"/><path d="M18.900,52.200 l2.800,2.800 M12.800,48.300 h4.400"/>
  <path d="M12,79.200 h7.200 M12,83.700 h7.200" stroke-width="1.600"/>
 </g>
</svg>

<!-- toolbox -->
<div id="toolbox">
 <div class="abs" style="left:0;top:460px;width:45px;height:35px;background:#ECEFF3"></div>
 <svg class="abs" style="left:13px;top:470.800px" width="20" height="17" viewBox="0 0 20 17"><g fill="#4A4E57"><path d="M1.2,2 h4 l1.2,.9 h2.2 l1.2,-.9 h1.9 v4.8 h-1.9 l-1.2,.9 h-2.2 l-1.2,-.9 h-4z"/><path d="M1.2,9.3 h4 l1.2,.9 h2.2 l1.2,-.9 h8 v4.8 h-8 l-1.2,.9 h-2.2 l-1.2,-.9 h-4z"/></g><path d="M17.3,1.2 l-3,2.6 l3,2.6" fill="none" stroke="#4A4E57" stroke-width="1.3"/></svg>
</div>
<div class="cat" style="top:85px"><i style="background:#4C97FF"></i><span>Motion</span></div>
<div class="cat" style="top:122px"><i style="background:#9966FF"></i><span>Looks</span></div>
<div class="cat" style="top:160px"><i style="background:#FFD500"></i><span>Events</span></div>
<div class="cat" style="top:197px"><i style="background:#FFAB19"></i><span>Control</span></div>
<div class="cat" style="top:235px"><i style="background:#4CBFE6"></i><span>Sensing</span></div>
<div class="cat" style="top:273px"><i style="background:#40BF4A"></i><span>Operators</span></div>
<div class="cat" style="top:310px"><i style="background:#FF8C1A"></i><span>Variables</span></div>
<div class="cat" style="top:348px"><i style="background:#FF6680"></i><span>My Blocks</span></div>
<div class="cat" style="top:385px"><i style="background:#CCCCCC"></i><span>Comments</span></div>

<!-- tab bar -->
<div id="tabbar">
 <div id="tab">
  <svg class="abs" style="left:7px;top:7.5px" width="22" height="20" viewBox="0 0 22 20"><g fill="#3D9AF5"><path d="M0,0.4 h2.2 l1,.9 h3 l1,-.9 h13.8 v7.2 h-13.8 l-1,1 h-3 l-1,-1 h-2.2z"/><path d="M0,10.4 h2.2 l1,.9 h3 l1,-.9 h13.8 v6.9 h-13.8 l-1,1.3 h-3 l-1,-1.3 h-2.2z"/></g></svg>
  <span class="t">Code</span>
  <svg class="abs" style="left:63px;top:10.5px" width="16" height="13" viewBox="0 0 16 13"><path d="M0.5,4 h2.600 l4.300,-3.600 v12 l-4.300,-3.600 h-2.600z" fill="#3D9AF5"/><path d="M9.300,3.300 q2,3.100 0,6.200 M11.600,1.200 q3.700,5.200 0,10.400" fill="none" stroke="#3D9AF5" stroke-width="1.35"/></svg>
 </div>
</div>
<div class="abs" style="left:45px;top:78px;width:40px;height:1px;background:#DDDDDD"></div>

<!-- right panel -->
<div class="abs" style="left:649px;top:37px;width:1px;height:536px;background:rgba(213,204,196,.75);z-index:2"></div>
<div id="panel">
 <div id="phead">
  <span class="ttl">Devices</span>
  <div class="pbtn" style="left:204.3px"></div>
  <div class="pbtn" style="left:241.7px;background:#fff"></div>
  <div class="pbtn" style="left:279.4px"></div>
  <div class="pbtn" style="left:316.8px"></div>
  <svg class="abs" style="left:204.300px;top:9px" width="24.500" height="24.500" viewBox="0 -0.700 24.500 24.500"><path d="M10.200,8 l-5.200,4.300 l5.200,4.300 M14.300,8 l5.200,4.300 l-5.200,4.300" fill="none" stroke="#0B5CB0" stroke-width="2.500"/></svg>
  <svg class="abs" style="left:241.700px;top:9px" width="24.500" height="24.500" viewBox="0 0.100 24.500 24.500"><path d="M8,4.600 h8.500 v2.400 h2.300 l.7,.7 v11.700 h-14.800 v-11.700 l.7,-.7 h2.600z" fill="#0A52A0"/><g fill="#fff"><rect x="7.300" y="14.600" width="1.700" height="3.700"/><rect x="11.200" y="14.600" width="1.700" height="3.700"/><rect x="15.200" y="14.600" width="1.700" height="3.700"/></g></svg>
  <svg class="abs" style="left:279.400px;top:9px" width="24.500" height="24.500" viewBox="0 -0.900 24.500 24.500"><path d="M2.700,17.200 v-2.600 a9.250,9.300 0 0,1 18.500,0 v2.600z" fill="#0B5CB0"/><path d="M8.40,14.60 L4.30,14.60 M8.88,12.80 L5.33,10.75 M10.20,11.48 L8.15,7.93 M12.00,11.00 L12.00,6.90 M13.80,11.48 L15.85,7.93 M15.12,12.80 L18.67,10.75 M15.60,14.60 L19.70,14.60" stroke="#3C97F5" stroke-width="1.150" fill="none"/><circle cx="12" cy="14.600" r="1.600" fill="#3C97F5"/></svg>
  <svg class="abs" style="left:316.800px;top:9px" width="24.500" height="24.500" viewBox="0 -0.700 24.500 24.500"><circle cx="12.200" cy="12.300" r="7.600" fill="#0B5CB0"/><text x="12.200" y="16.400" text-anchor="middle" font-family="'Liberation Sans',sans-serif" font-weight="700" font-size="11.500" fill="#2C8EF4">?</text></svg>
  <svg class="abs" style="left:352px;top:8px" width="20" height="28" viewBox="0 0 20 28"><path d="M3.600,3.200 l12.200,10.700 l-12.200,10.700" fill="none" stroke="#C2BDB9" stroke-width="2.300"/></svg>
 </div>
 <svg class="abs" style="left:0;top:0" width="374" height="537" viewBox="0 0 374 537"><rect x="8" y="49.30" width="359.800" height="52.4" rx="6" fill="#E6E8EE"/><g transform="translate(8,49.40)"><path d="M17.200,12 h4.500 v30.500 h-4.500 a2.200,2.200 0 0,1 -2.200,-2.200 v-26.100 a2.200,2.200 0 0,1 2.200,-2.200z M23,12 h18.700 a2.200,2.200 0 0,1 2.200,2.200 v26.100 a2.200,2.200 0 0,1 -2.200,2.200 h-18.700z" fill="#454A54"/><path d="M7.100,27 h7.900 v4.650 h-7.900z M7.100,32.750 h7.900 v4.950 h-7.900z" fill="#454A54"/><rect x="7.100" y="19.800" width="6.900" height="1.900" fill="#1EAEDB"/><g fill="#E6E8EE"><rect x="25" y="25.850" width="17.100" height="1.100"/><rect x="25" y="28.750" width="17.100" height="1.100"/><rect x="25" y="31.650" width="17.100" height="1.100"/><rect x="25" y="34.650" width="17.100" height="1.100"/></g></g><path transform="translate(336.500,62.90)" d="M0,3.100 h6.300 v-3.100 h11.400 v3.100 h6.500 v21.900 h-24.200z" fill="#2494FC"/><rect x="8" y="109.45" width="359.800" height="52.4" rx="6" fill="#E6E8EE"/><g transform="translate(8,109.55)"><path d="M17.200,12 h4.500 v30.500 h-4.500 a2.200,2.200 0 0,1 -2.200,-2.200 v-26.100 a2.200,2.200 0 0,1 2.200,-2.200z M23,12 h18.700 a2.200,2.200 0 0,1 2.200,2.200 v26.100 a2.200,2.200 0 0,1 -2.200,2.200 h-18.700z" fill="#454A54"/><path d="M7.100,27 h7.900 v4.650 h-7.900z M7.100,32.750 h7.900 v4.950 h-7.900z" fill="#454A54"/><rect x="7.100" y="19.800" width="6.900" height="1.900" fill="#1EAEDB"/><g fill="#E6E8EE"><rect x="25" y="25.850" width="17.100" height="1.100"/><rect x="25" y="28.750" width="17.100" height="1.100"/><rect x="25" y="31.650" width="17.100" height="1.100"/><rect x="25" y="34.650" width="17.100" height="1.100"/></g></g><path transform="translate(336.500,123.05)" d="M0,3.100 h6.300 v-3.100 h11.400 v3.100 h6.500 v21.900 h-24.200z" fill="#2494FC"/><rect x="8" y="169.60" width="359.800" height="52.4" rx="6" fill="#E6E8EE"/><g transform="translate(8,169.70)"><path d="M17.200,12 h4.500 v30.500 h-4.500 a2.200,2.200 0 0,1 -2.200,-2.200 v-26.100 a2.200,2.200 0 0,1 2.200,-2.200z M23,12 h18.700 a2.200,2.200 0 0,1 2.200,2.200 v26.100 a2.200,2.200 0 0,1 -2.200,2.200 h-18.700z" fill="#454A54"/><path d="M7.100,27 h7.900 v4.650 h-7.900z M7.100,32.750 h7.900 v4.950 h-7.900z" fill="#454A54"/><rect x="7.100" y="19.800" width="6.900" height="1.900" fill="#1EAEDB"/><g fill="#E6E8EE"><rect x="25" y="25.850" width="17.100" height="1.100"/><rect x="25" y="28.750" width="17.100" height="1.100"/><rect x="25" y="31.650" width="17.100" height="1.100"/><rect x="25" y="34.650" width="17.100" height="1.100"/></g></g><path transform="translate(336.500,183.20)" d="M0,3.100 h6.300 v-3.100 h11.400 v3.100 h6.500 v21.900 h-24.200z" fill="#2494FC"/><rect x="8" y="229.75" width="359.800" height="52.4" rx="6" fill="#E6E8EE"/><g transform="translate(8,229.85)"><path d="M17.200,12 h4.500 v30.500 h-4.500 a2.200,2.200 0 0,1 -2.200,-2.200 v-26.100 a2.200,2.200 0 0,1 2.200,-2.200z M23,12 h18.700 a2.200,2.200 0 0,1 2.200,2.200 v26.100 a2.200,2.200 0 0,1 -2.200,2.200 h-18.700z" fill="#454A54"/><path d="M7.100,27 h7.900 v4.650 h-7.900z M7.100,32.750 h7.900 v4.950 h-7.900z" fill="#454A54"/><rect x="7.100" y="19.800" width="6.900" height="1.900" fill="#1EAEDB"/><g fill="#E6E8EE"><rect x="25" y="25.850" width="17.100" height="1.100"/><rect x="25" y="28.750" width="17.100" height="1.100"/><rect x="25" y="31.650" width="17.100" height="1.100"/><rect x="25" y="34.650" width="17.100" height="1.100"/></g></g><path transform="translate(336.500,243.35)" d="M0,3.100 h6.300 v-3.100 h11.400 v3.100 h6.500 v21.900 h-24.200z" fill="#2494FC"/><rect x="8" y="289.90" width="359.800" height="52.4" rx="6" fill="#E6E8EE"/><g transform="translate(8,290.00)"><path d="M17.200,12 h4.500 v30.500 h-4.500 a2.200,2.200 0 0,1 -2.200,-2.200 v-26.100 a2.200,2.200 0 0,1 2.200,-2.200z M23,12 h18.700 a2.200,2.200 0 0,1 2.200,2.200 v26.100 a2.200,2.200 0 0,1 -2.200,2.200 h-18.700z" fill="#454A54"/><path d="M7.100,27 h7.900 v4.650 h-7.900z M7.100,32.750 h7.900 v4.950 h-7.900z" fill="#454A54"/><rect x="7.100" y="19.800" width="6.900" height="1.900" fill="#1EAEDB"/><g fill="#E6E8EE"><rect x="25" y="25.850" width="17.100" height="1.100"/><rect x="25" y="28.750" width="17.100" height="1.100"/><rect x="25" y="31.650" width="17.100" height="1.100"/><rect x="25" y="34.650" width="17.100" height="1.100"/></g></g><path transform="translate(336.500,303.50)" d="M0,3.100 h6.300 v-3.100 h11.400 v3.100 h6.500 v21.900 h-24.200z" fill="#2494FC"/><rect x="8" y="350.05" width="359.800" height="52.4" rx="6" fill="#E6E8EE"/><g transform="translate(8,350.15)"><path d="M17.200,12 h4.500 v30.500 h-4.500 a2.200,2.200 0 0,1 -2.200,-2.200 v-26.100 a2.200,2.200 0 0,1 2.200,-2.200z M23,12 h18.700 a2.200,2.200 0 0,1 2.200,2.200 v26.100 a2.200,2.200 0 0,1 -2.200,2.200 h-18.700z" fill="#454A54"/><path d="M7.100,27 h7.900 v4.650 h-7.900z M7.100,32.750 h7.900 v4.950 h-7.900z" fill="#454A54"/><rect x="7.100" y="19.800" width="6.900" height="1.900" fill="#1EAEDB"/><g fill="#E6E8EE"><rect x="25" y="25.850" width="17.100" height="1.100"/><rect x="25" y="28.750" width="17.100" height="1.100"/><rect x="25" y="31.650" width="17.100" height="1.100"/><rect x="25" y="34.650" width="17.100" height="1.100"/></g></g><path transform="translate(336.500,363.65)" d="M0,3.100 h6.300 v-3.100 h11.400 v3.100 h6.500 v21.900 h-24.200z" fill="#2494FC"/><rect x="8" y="410.20" width="359.800" height="52.4" rx="6" fill="#E6E8EE"/><g transform="translate(8,409.40)"><g transform="translate(4.700,12.300)"><path d="M11.900,0.300 L13.400,2 Q21.200,0.600 29,2 L30.500,0.300 C33.500,0.800 35.500,2.500 37.500,5 C40.500,9 42.400,17 42.400,23.500 C42.400,28 40.800,30.800 38.200,30.800 C36,30.800 34.600,29 33.200,26.600 C31.500,23.500 30.500,22.300 28.500,21.400 Q21.200,18.800 13.900,21.400 C11.900,22.300 10.900,23.500 9.200,26.600 C7.800,29 6.400,30.800 4.200,30.800 C1.600,30.800 0,28 0,23.500 C0,17 1.900,9 4.900,5 C6.900,2.500 8.900,0.800 11.900,0.300 Z" fill="#454A54"/><path d="M8.200,5.100 Q21.200,2 34.200,5.100 L36,8 L37.500,15.200 L33.800,18.500 Q21.200,18.300 8.600,18.500 L4.900,15.200 L6.400,8 Z" fill="#E8EAEF"/><circle cx="7.100" cy="10.300" r="4.150" fill="#454A54"/><circle cx="35.300" cy="10.300" r="4.150" fill="#454A54"/><circle cx="7.100" cy="10.300" r="2.750" fill="#fff"/><circle cx="35.300" cy="10.300" r="2.750" fill="#fff"/><rect x="16.500" y="7.600" width="9.400" height="5.900" fill="#3B9BF5"/></g></g><rect x="8" y="470.35" width="359.800" height="52.4" rx="6" fill="#fff"/><path transform="translate(26.200,488.15)" d="M8.300,1.200 v14.200 M1.200,8.300 h14.200" stroke="#2196F3" stroke-width="2.400" fill="none"/></svg>
 <div class="card" style="top:49px"><span class="nm">L1</span><div class="port"><b>2</b></div></div>
 <div class="card" style="top:109px"><span class="nm">L2</span><div class="port"><b>3</b></div></div>
 <div class="card" style="top:170px"><span class="nm">L3</span><div class="port"><b>4</b></div></div>
 <div class="card" style="top:230px"><span class="nm">R1</span><div class="port"><b>5</b></div></div>
 <div class="card" style="top:290px"><span class="nm">R2</span><div class="port"><b>6</b></div></div>
 <div class="card" style="top:350px"><span class="nm">R3</span><div class="port"><b>7</b></div></div>
 <div class="card" style="top:410px"><span class="nm">Controller1</span></div>
 <div class="card" style="top:470px"><span class="nm" style="left:67.500px;letter-spacing:-.17px">Add a device</span></div>
</div>

<!-- top bar -->
<div id="topbar">
 <div id="logo"><span>V5</span></div>
 <div class="sep" style="left:77px"></div>
 <div class="sep" style="left:111px"></div>
 <div class="sep" style="left:839px"></div>
 <div class="sep" style="left:945px"></div>
 <span class="abs" style="left:87.3px;top:11.5px;color:#fff;font-size:9.6px;line-height:12px;letter-spacing:-.25px;-webkit-text-stroke:.25px #fff">File</span>
 <svg class="abs" style="left:46px;top:10px" width="28" height="16" viewBox="0 0 28 16"><g fill="none" stroke="#fff" stroke-width="1.300"><circle cx="7.8" cy="7.7" r="5.7"/><ellipse cx="7.8" cy="7.7" rx="2.6" ry="5.7"/><path d="M7.8,2 v11.4 M2.1,7.7 h11.4 M3,4.6 h9.6 M3,10.8 h9.6"/></g><path d="M18.9,6.2 h5.8 a.5,.5 0 0,1 .4,.8 l-2.9,3 a.6,.6 0 0,1 -.8,0 l-2.9,-3 a.5,.5 0 0,1 .4,-.8z" fill="#fff"/></svg>
 <svg class="abs" style="left:126px;top:3.5px" width="16" height="16" viewBox="0 0 16 16"><path d="M7.6,2.6 a3.7,3.7 0 0,1 2.3,6.6 c-.5,.5 -.6,1 -.6,1.9 h-3.4 c0,-.9 -.1,-1.4 -.6,-1.9 a3.7,3.7 0 0,1 2.3,-6.600z" fill="#fff"/><rect x="6" y="11.8" width="3.2" height="1.1" rx=".5" fill="#fff"/><rect x="6.4" y="13.5" width="2.4" height="1" rx=".5" fill="#fff"/><g stroke="#fff" stroke-width="1" stroke-linecap="round"><path d="M7.6,.6 v.5 M3,2.5 l.4,.4 M12.2,2.5 l-.4,.4 M1.1,6.4 h.5 M13.6,6.4 h.5 M3,10.4 l.4,-.4 M12.2,10.4 l-.4,-.4"/></g></svg>
 <span class="tlabel" style="left:103.8px;width:60px;top:23.9px;font-size:6.0px">TUTORIALS</span>
 <svg class="abs" style="left:346px;top:5px" width="16" height="13" viewBox="0 0 16 13"><path d="M5.4,1.2 v6.4 l-4.4,-3.200z" fill="#fff"/><path d="M5,4.4 h5.2 a3.2,3.2 0 0,1 0,6.400 h-4.200" fill="none" stroke="#fff" stroke-width="1.9"/></svg>
 <span class="tlabel" style="left:323.5px;width:60px;top:23.3px;font-size:6.4px">UNDO</span>
 <svg class="abs dim" style="left:373.5px;top:5px" width="16" height="13" viewBox="0 0 16 13"><path d="M9.800,1.2 v6.4 l4.4,-3.200z" fill="#fff"/><path d="M10.200,4.4 h-5.200 a3.2,3.2 0 0,0 0,6.400 h4.200" fill="none" stroke="#fff" stroke-width="1.9"/></svg>
 <span class="tlabel dim" style="left:351.3px;width:60px;top:23.3px;font-size:6.1px">REDO</span>
 <svg class="abs" style="left:404px;top:5px" width="19" height="18" viewBox="0 0 19 18"><rect x="5" y="1.5" width="11.4" height="11.6" fill="none" stroke="#fff" stroke-width="1.2"/><rect x="1.2" y="4.2" width="13" height="12.400" fill="#fff"/><text x="4.900" y="11.300" font-family="'Liberation Sans',sans-serif" font-weight="700" font-size="9.800" fill="#2A86EE" stroke="#2A86EE" stroke-width=".3">1</text></svg>
 <span class="tlabel" style="left:383.4px;width:60px;top:25.0px;font-size:5.5px">SLOT</span>
 <div class="abs" style="left:435px;top:2.5px;width:127px;height:30.500px;border-radius:4px;background:#2783E9"></div>
 <svg class="abs" style="left:440.400px;top:11.400px" width="11.100" height="12" viewBox="0 0 12 13"><path d="M6,.6 l5,2.900 v5.800 l-5,2.900 l-5,-2.900 v-5.800z" fill="#fff" stroke="#fff" stroke-width=".8" stroke-linejoin="round"/></svg>
 <span class="abs" style="left:457.300px;top:10.5px;color:#fff;font-size:11.600px;line-height:14px;letter-spacing:-.25px;white-space:nowrap">VEXcode Project</span>
 <svg class="abs" style="left:764px;top:6px" width="21" height="14" viewBox="0 0 21 14"><path d="M5.200,.8 h10 c3.200,0 4.900,3.600 4.900,8 c0,2.800 -.8,4.400 -2.300,4.400 c-1.300,0 -2.100,-1 -2.900,-2.600 c-.4,-.8 -1,-1.200 -1.900,-1.200 h-5.600 c-.9,0 -1.500,.4 -1.900,1.200 c-.8,1.600 -1.600,2.600 -2.900,2.600 c-1.500,0 -2.300,-1.600 -2.300,-4.400 c0,-4.400 1.700,-8 4.900,-8z" fill="#fff"/><rect x="6.900" y="3" width="6.600" height="3.200" rx=".4" fill="#2E90F6"/><circle cx="3.900" cy="5" r=".85" fill="#2E90F6"/><circle cx="16.500" cy="5" r=".85" fill="#2E90F6"/></svg>
 <span class="tlabel" style="left:744.2px;width:60px;top:25.1px;font-size:5.85px">CONTROLLER</span>
 <svg class="abs" style="left:802px;top:6px" width="32" height="14" viewBox="0 0 32 14"><rect x="1.500" y="1.700" width="16.400" height="10.600" rx=".6" fill="none" stroke="#fff" stroke-width="2"/><rect x="15.800" y="1.700" width="2.600" height="10.600" fill="#fff"/><circle cx="17.300" cy="7" r=".6" fill="#2E90F6"/><path d="M24.200,5.500 h5.800 a.5,.5 0 0,1 .4,.8 l-2.900,3 a.6,.6 0 0,1 -.8,0 l-2.900,-3 a.5,.5 0 0,1 .4,-.8z" fill="#fff"/></svg>
 <span class="tlabel" style="left:782.2px;width:60px;top:25.1px;font-size:6.0px">BRAIN</span>
 <svg class="abs dim" style="left:854px;top:5.500px" width="17" height="15" viewBox="0 0 17 15"><path d="M6.300,.8 h3.800 v4.200 h2.800 l-4.700,4.700 l-4.700,-4.700 h2.800z" fill="#fff"/><path d="M1,8.200 l1.600,-1.300 h1.200 l-1.500,1.800 h3 l1,1.800 h3.800 l1,-1.800 h3 l-1.500,-1.800 h1.200 l1.600,1.300 v4.600 a.6,.6 0 0,1 -.6,.6 h-13.200 a.6,.6 0 0,1 -.6,-.6z" fill="#fff"/></svg>
 <span class="tlabel dim" style="left:832.3px;width:60px;top:25.1px;font-size:5.9px">DOWNLOAD</span>
 <svg class="abs dim" style="left:893px;top:6px" width="13" height="14" viewBox="0 0 13 14"><path d="M1.200,1 l10.400,6.200 l-10.400,6.200z" fill="#fff"/></svg>
 <span class="tlabel dim" style="left:869.0px;width:60px;top:25.1px;font-size:6.0px">START</span>
 <svg class="abs dim" style="left:923px;top:6px" width="14" height="14" viewBox="0 0 14 14"><rect x="1" y="1.200" width="12.300" height="11.800" rx=".5" fill="#fff"/></svg>
 <span class="tlabel dim" style="left:900.3px;width:60px;top:25.1px;font-size:5.7px">STOP</span>
 <svg class="abs" style="left:959px;top:5px" width="18" height="15" viewBox="0 0 18 15"><path d="M7.200,3.800 h-4.600 v9.600 h11.500 v-3.400" fill="none" stroke="#fff" stroke-width="1.900"/><path d="M12,.6 l4.800,4 l-4.800,4 v-2.500 c-2.600,0 -4.200,.8 -5.500,2.800 c.3,-3.400 2.200,-5.500 5.500,-5.900z" fill="#fff"/></svg>
 <span class="tlabel" style="left:938.2px;width:60px;top:25.1px;font-size:5.7px">SHARE</span>
 <svg class="abs" style="left:997px;top:6px" width="13.200" height="15" viewBox="0 0 15 15" preserveAspectRatio="none"><path d="M1.400,.9 h11.600 a.9,.9 0 0,1 .9,.9 v8 a.9,.9 0 0,1 -.9,.9 h-8.600 l-3.900,3 v-11.900 a.9,.9 0 0,1 .9,-.900z" fill="#fff"/><g fill="#2E90F6"><rect x="3.600" y="5.200" width="1.700" height="1.500"/><rect x="6.400" y="5.200" width="1.700" height="1.500"/><rect x="9.200" y="5.200" width="1.700" height="1.500"/></g></svg>
 <span class="tlabel" style="left:973.2px;width:60px;top:25.1px;font-size:5.65px">FEEDBACK</span>
</div>

</div>
</body>
</html>
